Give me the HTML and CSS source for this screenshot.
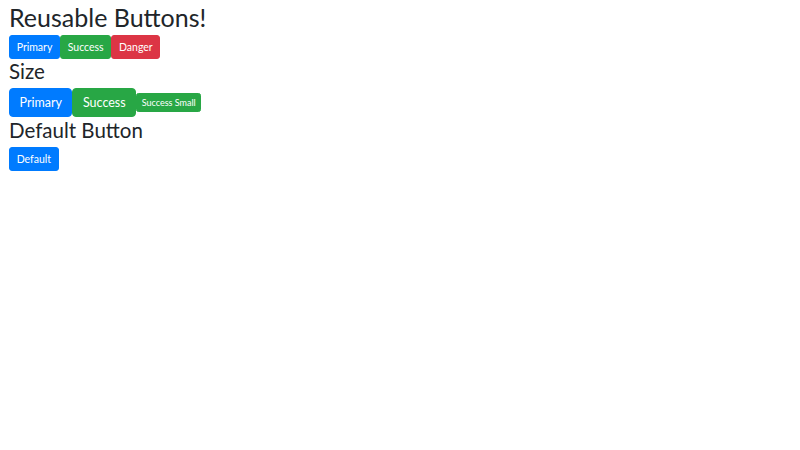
FILE: index.html
```html
<!DOCTYPE html>
<html lang="en">
<head>
<meta charset="utf-8">
<title>Reusable Buttons</title>
<link rel="stylesheet" href="styles.css">
</head>
<body>
<div class="page">
  <h1 class="title">Reusable Buttons!</h1>
  <div class="btn-row">
    <button class="btn btn-primary">Primary</button>
    <button class="btn btn-success">Success</button>
    <button class="btn btn-danger">Danger</button>
  </div>
  <h2 class="subtitle">Size</h2>
  <div class="btn-row">
    <button class="btn btn-primary btn-lg">Primary</button>
    <button class="btn btn-success btn-lg">Success</button>
    <button class="btn btn-success btn-sm">Success Small</button>
  </div>
  <h2 class="subtitle subtitle-spaced">Default Button</h2>
  <div class="btn-row">
    <button class="btn btn-primary">Default</button>
  </div>
</div>
</body>
</html>
```

FILE: styles.css
```css
html, body {
  margin: 0;
  padding: 0;
  background: #ffffff;
}

body {
  font-family: Lato, "Liberation Sans", sans-serif;
  color: #212529;
}

.page {
  padding: 1px 9px 0;
}

.title {
  margin: 0 0 2px;
  font-size: 25px;
  line-height: 32px;
  font-weight: 400;
}

.subtitle {
  margin: 0 0 5px;
  font-size: 20.5px;
  line-height: 24px;
  font-weight: 400;
}

.subtitle-spaced {
  margin-top: 1px;
}

.btn-row {
  display: flex;
  align-items: center;
}

.btn {
  font-family: inherit;
  font-size: 10.5px;
  line-height: 15px;
  padding: 3.5px 6.7px;
  border: 1px solid transparent;
  border-radius: 3px;
  color: #ffffff;
  cursor: pointer;
}

.btn-primary {
  background: #007bff;
  border-color: #007bff;
}

.btn-success {
  background: #28a745;
  border-color: #28a745;
}

.btn-danger {
  background: #dc3545;
  border-color: #dc3545;
}

.btn-lg {
  font-size: 12.5px;
  line-height: 18px;
  padding: 4.5px 9.5px;
  border-radius: 4px;
}

.btn-sm {
  font-size: 9px;
  line-height: 13px;
  padding: 2px 4.5px;
  border-radius: 2.5px;
}
```
